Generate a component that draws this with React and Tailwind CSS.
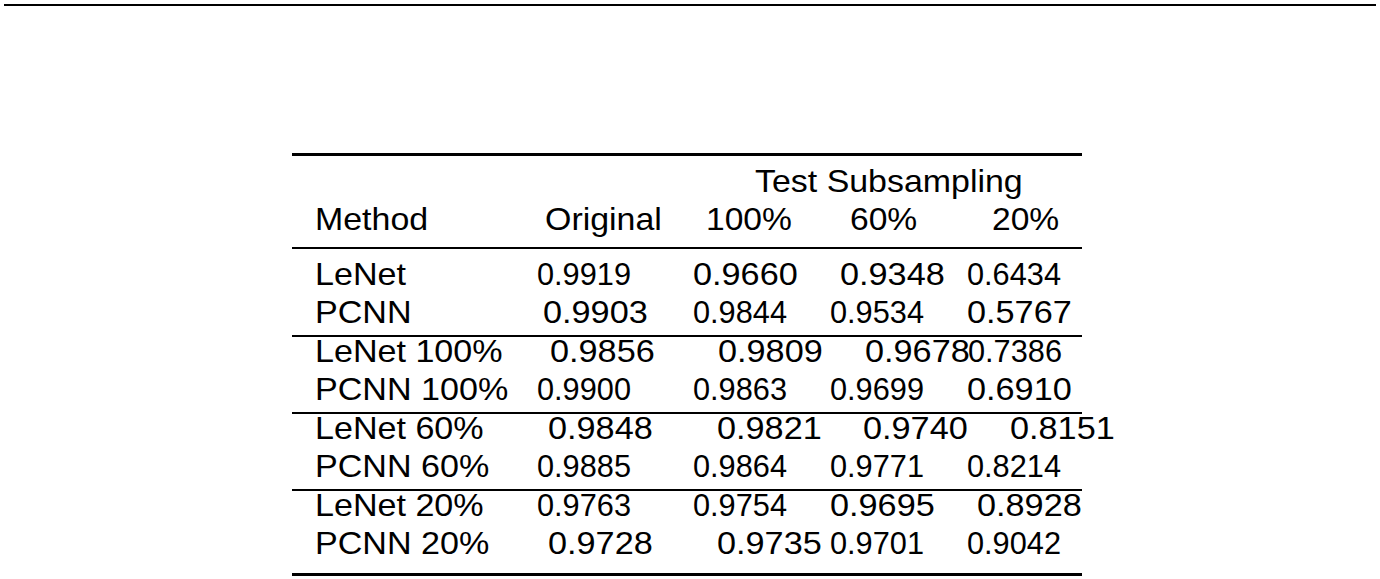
import React from "react";

// the source glyphs are stretched sideways, not spaced out
const C = "scale-x-[0.96]";
const W = "scale-x-[1.07]";

// each group is two rows, separated by a thin rule
const groups = [
  [
    ["LeNet", ["0.9919", C], ["0.9660", W], ["0.9348", `${W} ml-[10px]`], ["0.6434", C]],
    ["PCNN", ["0.9903", `${W} ml-[6px]`], ["0.9844", C], ["0.9534", C], ["0.5767", W]],
  ],
  [
    ["LeNet 100%", ["0.9856", `${W} ml-[13px]`], ["0.9809", `${W} ml-[25px]`], ["0.9678", `${W} ml-[35px]`], ["0.7386", `${C} ml-[1px]`]],
    ["PCNN 100%", ["0.9900", C], ["0.9863", C], ["0.9699", C], ["0.6910", W]],
  ],
  [
    ["LeNet 60%", ["0.9848", `${W} ml-[11px]`], ["0.9821", `${W} ml-[24px]`], ["0.9740", `${W} ml-[33px]`], ["0.8151", `${W} ml-[43px]`]],
    ["PCNN 60%", ["0.9885", C], ["0.9864", C], ["0.9771", C], ["0.8214", C]],
  ],
  [
    ["LeNet 20%", ["0.9763", C], ["0.9754", C], ["0.9695", W], ["0.8928", `${W} ml-[10px]`]],
    ["PCNN 20%", ["0.9728", `${W} ml-[11px]`], ["0.9735", `${W} ml-[24px]`], ["0.9701", C], ["0.9042", C]],
  ],
];

const cols = "grid grid-cols-[222px_156px_137px_137px_115px]";

const Row = ({ row }) => {
  const [name, ...cells] = row;
  return (
    <div className={`${cols} h-[37.5px] leading-[29px]`}>
      <div className="whitespace-nowrap">
        <span className="inline-block origin-left scale-x-[1.065]">{name}</span>
      </div>
      {cells.map(([t, c], i) => (
        <div key={i} className="whitespace-nowrap">
          <span className={`inline-block origin-left ${c}`}>{t}</span>
        </div>
      ))}
    </div>
  );
};

export default function App() {
  return (
    <div className="w-[1380px] h-[579px] bg-white text-black overflow-hidden font-['Liberation_Sans',Arial,sans-serif]">
      <div className="mx-[4px] mt-[4px] h-[2px] bg-black" />

      <div className="ml-[292px] mt-[147px] w-[790px] border-t-[3px] border-b-[3px] border-black text-[32px] pb-[7px]">
        {/* header */}
        <div className="border-b-2 border-black pt-[6px] pb-[9px] pl-[23px] leading-[38px]">
          <div className="pl-[440px]">
            <span className="inline-block origin-left scale-x-[1.06]">Test Subsampling</span>
          </div>
          <div className={cols}>
            <div>
              <span className="inline-block origin-left scale-x-[1.06]">Method</span>
            </div>
            <div className="pl-[8px]">
              <span className="inline-block origin-left scale-x-[1.06]">Original</span>
            </div>
            <div className="pl-[13px]">
              <span className="inline-block origin-left scale-x-[1.05]">100%</span>
            </div>
            <div className="pl-[20px]">
              <span className="inline-block origin-left scale-x-[1.05]">60%</span>
            </div>
            <div className="pl-[25px]">
              <span className="inline-block origin-left scale-x-[1.05]">20%</span>
            </div>
          </div>
        </div>

        {/* body */}
        <div className="pt-[11px] pl-[23px]">
          {groups.map((g, gi) => (
            <div key={gi} className={gi > 0 ? "border-t-2 border-black -ml-[23px] pl-[23px]" : ""}>
              {g.map((row, ri) => (
                <Row key={ri} row={row} />
              ))}
            </div>
          ))}
        </div>
      </div>
    </div>
  );
}
